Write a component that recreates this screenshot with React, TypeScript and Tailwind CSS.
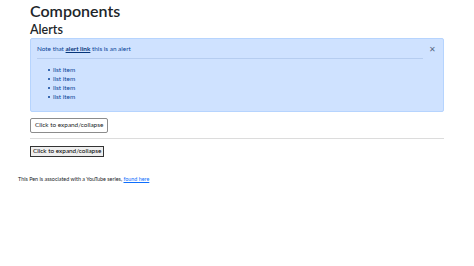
export default function App() {
  return (
    <div className="min-h-[266px] bg-white text-[#212529]" style={{ fontFamily: 'Lato, "Noto Sans", sans-serif' }}>
      <div className="mx-auto w-[414px]">
        <h1 className="pt-[1px] text-[16px] font-semibold leading-[20px]">Components</h1>
        <h2 className="text-[12.5px] font-semibold leading-[17px]">Alerts</h2>
        <div className="relative h-[74px] rounded-[2px] border border-[#b6d4fe] bg-[#cfe2ff] px-[6px] pt-[5px] text-[#084298]">
          <p className="text-[6.4px] leading-[10px]">
            Note that <a className="font-bold text-[#06357a] underline">alert link</a> this is an alert
          </p>
          <button className="absolute right-[7px] top-[6px] text-[8px] leading-none text-[#5a6b85]">✕</button>
          <hr className="mr-[14px] mt-[4px] border-t border-[#b6cdf0]" />
          <ul className="mt-[6px] pl-[11px] text-[6.4px] leading-[9px]">
            {[0, 1, 2, 3].map((i) => (
              <li key={i} className="flex items-center gap-[3px]">
                <span className="h-[2px] w-[2px] rounded-full bg-[#084298]" />
                list item
              </li>
            ))}
          </ul>
        </div>
        <button className="mt-[6px] block h-[15px] rounded-[2px] border border-[#8c8c8c] bg-white px-[4px] text-[6.4px] leading-none text-[#212529]">
          Click to expand/collapse
        </button>
        <hr className="mt-[5px] border-t border-[#dcdcdc]" />
        <button className="mt-[7px] block h-[11px] border border-[#333] bg-[#efefef] px-[2px] text-[6.4px] leading-none text-black">
          Click to expand/collapse
        </button>
      </div>
      <p className="mt-[18px] pl-[18px] text-[5.4px] leading-[8px] text-[#212529]">
        This Pen is associated with a YouTube series, <a className="text-[#0d6efd] underline">found here</a>
      </p>
    </div>
  );
}
